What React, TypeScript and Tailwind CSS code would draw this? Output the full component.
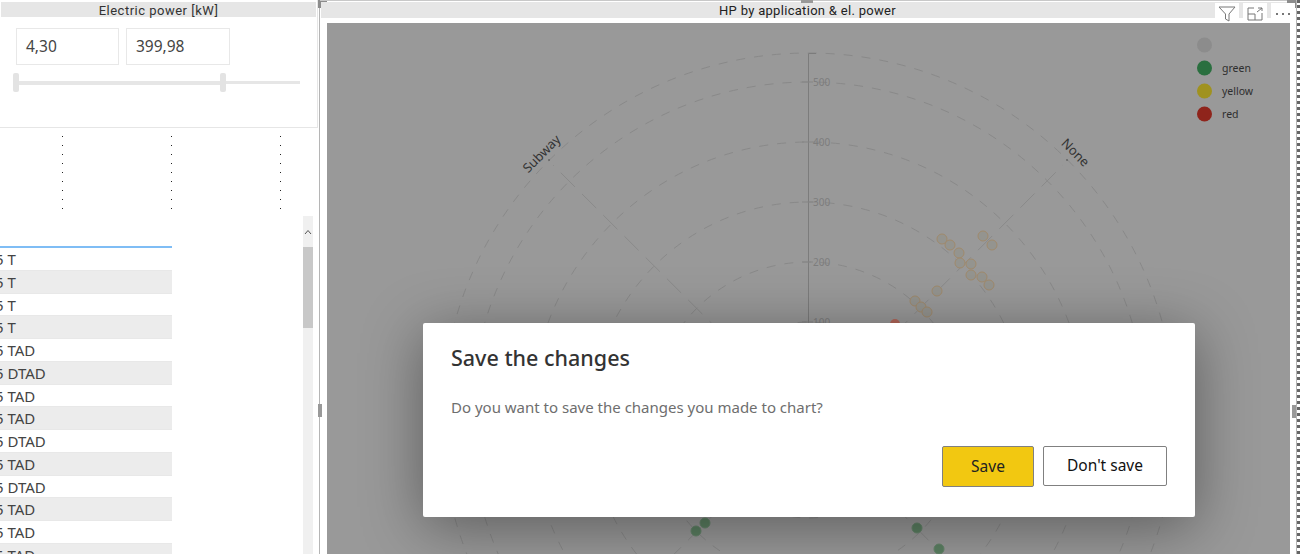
const rows = ["5 T","5 T","5 T","5 T","5 TAD","5 DTAD","5 TAD","5 TAD","5 DTAD","5 TAD","5 DTAD","5 TAD","5 TAD","5 TAD"];
const rings = [98,158,218,278,338,367];
const ticks = [[500,82],[400,142],[300,202],[200,262],[100,322]];
const tan = [[942,239],[950,245],[959,253],[960,263],[971,264],[971,275],[982,277],[989,285],[983,236],[992,245],[937,291],[915,301],[921,307],[927,312]];
const green = [[705,523],[696,531],[917,528],[939,549]];
const legend = [["",45,"#8c8c8c"],["green",68,"#2a6f3f"],["yellow",91,"#a0921f"],["red",114,"#8f241b"]] as const;
const spokes = [[553,165],[1063,165],[553,675],[1063,675]];

function Chart() {
  return (
    <svg viewBox="327 23 963 531" className="block w-[963px] h-[531px]" fill="none">
      {rings.map((r) => (
        <circle key={r} cx="808.5" cy="420" r={r} stroke="#898989" strokeWidth="1" strokeDasharray="9 9" />
      ))}
      {spokes.map(([x, y], i) => (
        <line key={i} x1="808.5" y1="420" x2={x} y2={y} stroke="#8a8a8a" strokeWidth="1" strokeDasharray="20 10" />
      ))}
      <path d="M816 53.5H808.5V420" stroke="#7c7c7c" strokeWidth="1" />
      {ticks.map(([v, y]) => (
        <g key={v}>
          <line x1="802" x2="813" y1={y} y2={y} stroke="#858585" />
          <text x="813" y={y + 3.5} fontSize="10" fill="#7d7d7d" fontFamily="'Noto Sans', sans-serif">{v}</text>
        </g>
      ))}
      <circle cx="549" cy="160" r="0.7" fill="#333" />
      <circle cx="1067" cy="160" r="0.7" fill="#333" />
      <text x="542" y="158" textAnchor="middle" transform="rotate(-45 542 154)" fontSize="13" fill="#333" fontFamily="'Noto Sans', sans-serif">Subway</text>
      <text x="1075" y="157" textAnchor="middle" transform="rotate(45 1075 153)" fontSize="13" fill="#333" fontFamily="'Noto Sans', sans-serif">None</text>
      {tan.map(([x, y], i) => (
        <circle key={i} cx={x} cy={y} r="5" fill="#94948f" stroke="#a08a6c" />
      ))}
      <circle cx="895" cy="324" r="5" fill="#b3675a" />
      {green.map(([x, y], i) => (
        <circle key={i} cx={x} cy={y} r="5" fill="#5b8062" stroke="#66866c" />
      ))}
      {legend.map(([t, y, c]) => (
        <g key={y}>
          <circle cx="1204.5" cy={y} r="7.5" fill={c} />
          <text x="1222" y={y + 3.5} fontSize="10.5" fill="#2e2e2e" fontFamily="'Noto Sans', sans-serif">{t}</text>
        </g>
      ))}
    </svg>
  );
}

function Slicer() {
  return (
    <div className="w-[318px] h-[128px] border-r border-b border-[#e6e6e6] pt-[2px]">
      <div className="h-[15px] ml-[1px] mr-[1px] bg-[#e6e6e6] text-center text-[13px] leading-[17px] tracking-[0.5px] text-[#333]">Electric power [kW]</div>
      <div className="flex gap-[7px] pl-[16px] pt-[11px]">
        <div className="w-[103px] h-[37px] border border-[#e8e8e8] pl-[9px] text-[15.5px] leading-[35px] text-[#444] font-['Noto_Sans',sans-serif]">4,30</div>
        <div className="w-[104px] h-[37px] border border-[#e8e8e8] pl-[9px] text-[15.5px] leading-[35px] text-[#444] font-['Noto_Sans',sans-serif]">399,98</div>
      </div>
      <div className="relative ml-[13px] mt-[8px] w-[287px] h-[20px]">
        <div className="absolute left-[3px] top-[8px] w-[207px] h-[4px] bg-[#e6e6e6]" />
        <div className="absolute left-[210px] top-[8px] w-[77px] h-[3px] bg-[#e6e6e6]" />
        <div className="absolute left-0 top-0 w-[6px] h-[19px] rounded-[2px] bg-[#e3e3e3]" />
        <div className="absolute left-[207px] top-0 w-[6px] h-[19px] rounded-[2px] bg-[#e3e3e3]" />
      </div>
    </div>
  );
}

function Table() {
  return (
    <div className="flex mt-[3px] h-[338px]">
      <div className="w-[172px] pt-[30px] overflow-hidden">
        <div className="h-[2px] bg-[#7fbdf5]" />
        {rows.map((t, i) => (
          <div key={i} className={`h-[22.75px] border-b border-[#e8e8e8] -ml-[5px] pl-0 text-[15px] leading-[23px] whitespace-nowrap text-[#444] font-['Noto_Sans',sans-serif] ${i % 2 ? "bg-[#ececec]" : "bg-white"}`}>{t}</div>
        ))}
      </div>
      <div className="ml-[131px] w-[10px] bg-[#f0f0f0]">
        <div className="h-[31px] flex items-center justify-center">
          <svg width="8" height="6" viewBox="0 0 8 6" fill="none"><path d="M1 5 4 1.5 7 5" stroke="#555" strokeWidth="1" /></svg>
        </div>
        <div className="h-[81px] bg-[#c8c8c8]" />
      </div>
    </div>
  );
}

function HeaderIcons() {
  return (
    <div className="absolute right-[1px] top-[2px] h-[21px] flex">
      <div className="w-[24px] bg-white flex items-center justify-center">
        <svg width="18" height="16" viewBox="0 0 18 16" fill="none"><path d="M1 1H17L11 8V15L7.5 13V8Z" stroke="#777" strokeWidth="1" /></svg>
      </div>
      <div className="w-[4px]" />
      <div className="w-[24px] bg-white flex items-center justify-center">
        <svg width="16" height="14" viewBox="0 0 16 14" fill="none"><path d="M7 1H1V13H15V6M1 7H8V13M10 5 15 1M11 1H15V4" stroke="#777" strokeWidth="1" /></svg>
      </div>
      <div className="w-[4px]" />
      <div className="w-[24px] bg-white flex items-center justify-center gap-[4px]">
        <div className="w-[2px] h-[2px] bg-[#777]" />
        <div className="w-[2px] h-[2px] bg-[#777]" />
        <div className="w-[2px] h-[2px] bg-[#777]" />
      </div>
    </div>
  );
}

function Dialog() {
  return (
    <div className="absolute left-[96px] top-[300px] w-[772px] h-[194px] bg-white rounded-[2px] shadow-[0_10px_60px_rgba(0,0,0,0.4)] pt-[21px] px-[28px] font-['Noto_Sans',sans-serif]">
      <div className="text-[21.5px] leading-[28px] font-medium text-[#333]">Save the changes</div>
      <div className="mt-[25px] text-[15px] leading-[20px] text-[#6e6e6e]">Do you want to save the changes you made to chart?</div>
      <div className="mt-[29px] flex justify-end gap-[9px]">
        <button className="w-[92px] h-[41px] bg-[#f2c811] border border-[#808080] rounded-[2px] text-[15.5px] text-[#222]">Save</button>
        <button className="w-[124px] h-[40px] bg-white border border-[#808080] rounded-[2px] text-[15.5px] text-[#111]">Don't save</button>
      </div>
    </div>
  );
}

export default function App() {
  return (
    <div className="relative w-[1306px] h-[554px] overflow-hidden bg-white flex font-['Roboto',sans-serif]">
      <aside className="w-[319px] shrink-0">
        <Slicer />
        <div className="flex gap-[108px] pl-[62px] pt-[8px] h-[85px]">
          {[0, 1, 2].map((c) => (
            <div key={c} className="w-px flex flex-col gap-[8px]">
              {[0, 1, 2, 3, 4, 5, 6, 7, 8].map((d) => (
                <div key={d} className="w-px h-px bg-[#222]" />
              ))}
            </div>
          ))}
        </div>
        <Table />
      </aside>
      <div className="relative w-px shrink-0 bg-[#b5b5b5]">
        <div className="absolute -left-[1px] top-[404px] w-[4px] h-[13px] bg-[#999]" />
        <div className="absolute -left-[1px] top-0 w-[9px] h-[3px] bg-[#8c8c8c]" />
        <div className="absolute -left-[1px] top-0 w-[4px] h-[8px] bg-[#8c8c8c]" />
      </div>
      <main className="relative w-[977px] shrink-0 border-t border-[#c8c8c8] border-r border-r-[#b5b5b5]">
        <div className="absolute left-[481px] -top-px w-[12px] h-[3px] bg-[#999]" />
        <div className="absolute right-0 -top-px w-[9px] h-[3px] bg-[#8c8c8c]" />
        <div className="absolute right-0 -top-px w-[4px] h-[8px] bg-[#8c8c8c]" />
        <div className="absolute right-0 top-[404px] w-[4px] h-[13px] bg-[#999]" />
        <div className="h-[16px] mt-px bg-[#e6e6e6] ml-px mr-[5px] pl-[3px] text-center text-[13px] leading-[17px] tracking-[0.3px] text-[#222]">HP by application &amp; el. power</div>
        <HeaderIcons />
        <div className="relative mt-[5px] ml-[7px] w-[963px] h-[531px] bg-[#999]">
          <Chart />
          <Dialog />
        </div>
      </main>
      <div className="w-[3px] shrink-0 border-l-[3px] border-dotted border-[#666]" />
    </div>
  );
}
